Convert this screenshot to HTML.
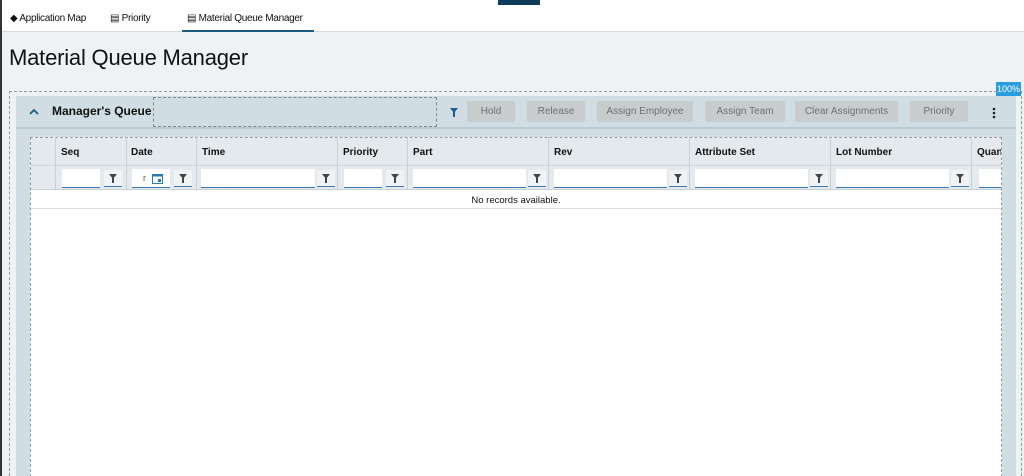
<!DOCTYPE html>
<html><head><meta charset="utf-8"><style>
*{box-sizing:border-box;margin:0;padding:0}
html,body{width:1024px;height:476px;overflow:hidden}
body{background:#eef2f5;font-family:"Liberation Sans",sans-serif;position:relative;font-size:11px;color:#111}
.abs{position:absolute}
.top{left:0;top:0;width:1024px;height:32px;background:#fff;border-bottom:1px solid #d4dbe0}
.tab{top:13px;font-size:10px;letter-spacing:-0.3px}
.btn{top:101px;height:21px;background:#c9cccd;color:#6d7072;font-size:10px;text-align:center;line-height:21px;border-radius:2px}
.col{top:137px;height:53px;border-left:1px solid #c8d0d4}
.hd{top:147px;font-size:10px;font-weight:bold}
.inp{top:169px;height:19px;background:#fff;border-bottom:1px solid #3a7ab0}
.fb{top:170px;width:18px;height:17px;background:#f0f2f3;border-bottom:1px solid #3a7ab0}
.fb:after{content:"";position:absolute;left:5px;top:4px;border-left:4px solid transparent;border-right:4px solid transparent;border-top:5px solid #444}
.fb:before{content:"";position:absolute;left:8px;top:8px;width:2px;height:5px;background:#444}
</style></head><body>
<div class="abs" style="left:0;top:0;width:2px;height:476px;background:#333;z-index:5"></div>
<div class="abs top"></div>
<div class="abs" style="left:498px;top:0;width:42px;height:5px;background:#0e3c5a"></div>
<div class="abs tab" style="left:10px">&#9670; Application Map</div>
<div class="abs tab" style="left:110px">&#9636; Priority</div>
<div class="abs tab" style="left:187px">&#9636; Material Queue Manager</div>
<div class="abs" style="left:182px;top:30px;width:132px;height:2px;background:#1f5a7e"></div>
<div class="abs" style="left:9px;top:45px;font-size:22px;letter-spacing:-0.2px;color:#111">Material Queue Manager</div>
<div class="abs" style="left:9px;top:91px;width:1013px;height:390px;border:1px dashed #999"></div>
<div class="abs" style="left:996px;top:82px;width:25px;height:14px;background:#2a9de0;color:#fff;font-size:9px;text-align:center;line-height:14px">100%</div>
<div class="abs" style="left:16px;top:96px;width:1000px;height:380px;background:#d0dde2"></div>
<div class="abs" style="left:16px;top:127px;width:1000px;height:2px;background:#b7cbd4"></div>
<svg class="abs" style="left:29px;top:108px" width="10" height="7"><path d="M1 6 L5 2 L9 6" stroke="#1f5a7e" stroke-width="1.8" fill="none"/></svg>
<div class="abs" style="left:52px;top:104px;font-size:12px;font-weight:bold">Manager's Queue</div>
<div class="abs" style="left:153px;top:97px;width:284px;height:30px;border:1px dashed #888"></div>
<div class="abs" style="left:450px;top:108px;border-left:4px solid transparent;border-right:4px solid transparent;border-top:5px solid #1f5a9e"></div>
<div class="abs" style="left:453px;top:112px;width:2px;height:5px;background:#1f5a9e"></div>
<div class="abs btn" style="left:467px;width:48px">Hold</div>
<div class="abs btn" style="left:527px;width:58px">Release</div>
<div class="abs btn" style="left:597px;width:96px">Assign Employee</div>
<div class="abs btn" style="left:705px;width:80px">Assign Team</div>
<div class="abs btn" style="left:795px;width:103px">Clear Assignments</div>
<div class="abs btn" style="left:910px;width:58px">Priority</div>
<svg class="abs" style="left:992px;top:107px" width="4" height="12"><circle cx="2" cy="2" r="1.3" fill="#222"/><circle cx="2" cy="6" r="1.3" fill="#222"/><circle cx="2" cy="10" r="1.3" fill="#222"/></svg>
<div class="abs" style="left:30px;top:137px;width:972px;height:345px;background:#fff;border:1px dashed #999"></div>
<div class="abs" style="left:31px;top:138px;width:970px;height:52px;background:#e3e9ec;border-bottom:1px solid #c8d0d4"></div>
<div class="abs" style="left:31px;top:165px;width:970px;height:1px;background:#cfd6da"></div>
<div class="abs" style="left:31px;top:208px;width:970px;height:1px;background:#ddd"></div>
<div class="abs col" style="left:55px"></div><div class="abs col" style="left:126px"></div><div class="abs col" style="left:196px"></div><div class="abs col" style="left:337px"></div><div class="abs col" style="left:407px"></div><div class="abs col" style="left:548px"></div><div class="abs col" style="left:689px"></div><div class="abs col" style="left:830px"></div><div class="abs col" style="left:971px"></div>
<div class="abs hd" style="left:61px">Seq</div><div class="abs hd" style="left:131px">Date</div><div class="abs hd" style="left:202px">Time</div><div class="abs hd" style="left:343px">Priority</div><div class="abs hd" style="left:413px">Part</div><div class="abs hd" style="left:554px">Rev</div><div class="abs hd" style="left:695px">Attribute Set</div><div class="abs hd" style="left:836px">Lot Number</div>
<div class="abs hd" style="left:977px;width:24px;overflow:hidden">Quantity</div>
<div class="abs inp" style="left:62px;width:38px"></div><div class="abs fb" style="left:104px"></div>
<div class="abs inp" style="left:132px;width:38px"></div>
<div class="abs" style="left:143px;top:173px;font-size:9px;color:#555">r</div>
<svg class="abs" style="left:152px;top:173px" width="11" height="11"><rect x="0.5" y="1.5" width="10" height="9" fill="none" stroke="#2a7ab8"/><rect x="0.5" y="1.5" width="10" height="2" fill="#2a7ab8"/><rect x="6" y="6" width="3" height="3" fill="#2a7ab8"/></svg>
<div class="abs fb" style="left:174px"></div>
<div class="abs inp" style="left:201px;width:114px"></div><div class="abs fb" style="left:317px"></div>
<div class="abs inp" style="left:344px;width:38px"></div><div class="abs fb" style="left:386px"></div>
<div class="abs inp" style="left:413px;width:113px"></div><div class="abs fb" style="left:528px"></div>
<div class="abs inp" style="left:554px;width:113px"></div><div class="abs fb" style="left:669px"></div>
<div class="abs inp" style="left:695px;width:113px"></div><div class="abs fb" style="left:810px"></div>
<div class="abs inp" style="left:836px;width:113px"></div><div class="abs fb" style="left:951px"></div>
<div class="abs inp" style="left:979px;width:22px"></div>
<div class="abs" style="left:31px;top:195px;width:970px;text-align:center;font-size:9.5px">No records available.</div>
</body></html>
